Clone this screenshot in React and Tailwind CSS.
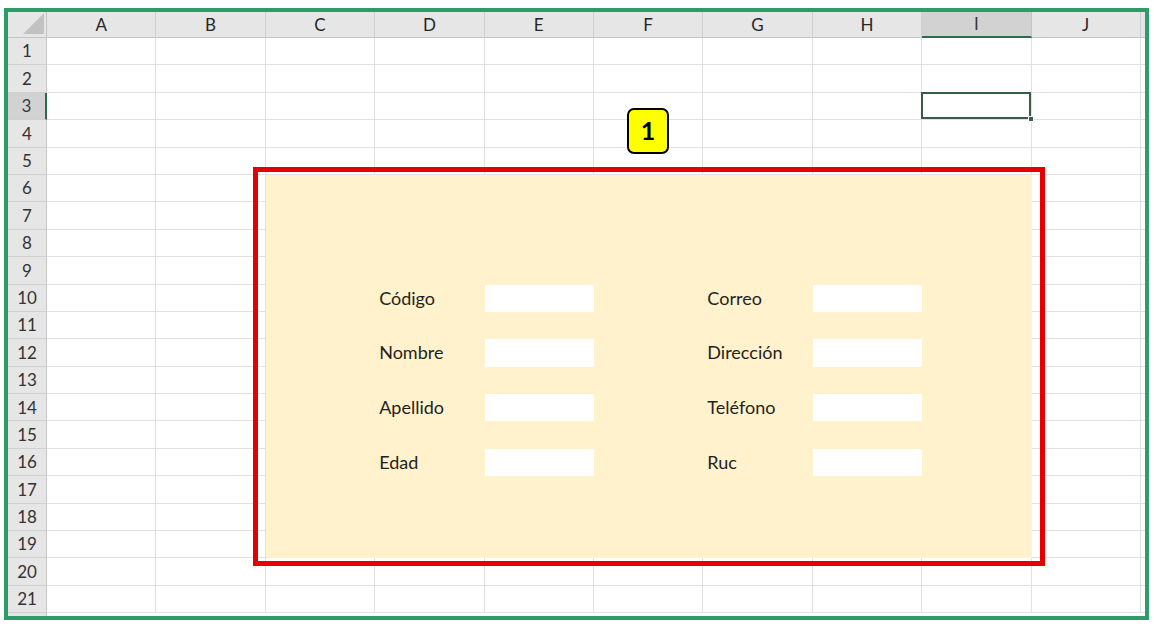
import React from "react";

const COLS = ["A", "B", "C", "D", "E", "F", "G", "H", "I", "J"];

// labels keyed by "row-col" (col index: A=0)
const LABELS = {
  "10-3": "Código",
  "12-3": "Nombre",
  "14-3": "Apellido",
  "16-3": "Edad",
  "10-6": "Correo",
  "12-6": "Dirección",
  "14-6": "Teléfono",
  "16-6": "Ruc",
};

const isBeige = (r, c) => r >= 6 && r <= 19 && c >= 2 && c <= 8;
const isBox = (r, c) => [10, 12, 14, 16].includes(r) && (c === 4 || c === 7);

function HeaderRow() {
  return (
    <>
      <div className="relative bg-[#e6e6e6] border-r border-b border-[#c4c4c4]">
        <div className="absolute right-[2px] bottom-[3px] w-0 h-0 border-l-[21px] border-l-transparent border-b-[21px] border-b-[#c2c2c2]" />
      </div>
      {COLS.map((name, i) =>
        i === 8 ? (
          <div
            key={name}
            className="flex items-center justify-center bg-[#d2d2d2] border-r border-[#c4c4c4] border-b-2 border-b-[#2f6b4a] text-[#3a3a3a] text-[17px]"
          >
            {name}
          </div>
        ) : (
          <div
            key={name}
            className="flex items-center justify-center bg-[#e6e6e6] border-r border-b border-[#d0d0d0] border-b-[#c4c4c4] text-[#262626] text-[17px]"
          >
            {name}
          </div>
        )
      )}
      <div className="bg-[#e6e6e6] border-b border-[#c4c4c4]" />
    </>
  );
}

function Cell({ r, c }) {
  const key = `${r}-${c}`;
  const label = LABELS[key];

  if (r === 3 && c === 8) {
    return (
      <div className="relative bg-white border-r border-b border-[#e1e1e1]">
        <div className="absolute -left-px -top-px right-0 bottom-0 border-2 border-[#3b5a47]" />
        <div className="absolute -right-[3px] -bottom-[3px] w-[6px] h-[6px] bg-[#3b5a47] border border-white" />
      </div>
    );
  }
  if (isBox(r, c)) {
    return <div className="bg-white" />;
  }
  if (isBeige(r, c)) {
    return (
      <div className="flex items-center bg-[#fff2cc] pl-1 text-[18px] text-[#1f1f1f] whitespace-nowrap overflow-visible">
        {label}
      </div>
    );
  }
  return <div className="bg-white border-r border-b border-[#e1e1e1]" />;
}

export default function App() {
  const rows = Array.from({ length: 21 }, (_, i) => i + 1);

  return (
    <div
      className="w-[1154px] h-[626px] bg-white pt-[8px] pl-[4px]"
      style={{ fontFamily: "Lato, 'Open Sans', sans-serif" }}
    >
      <div className="w-[1145px] h-[612px] border-4 border-[#2e9c68] overflow-hidden">
        <div className="relative grid h-full grid-cols-[39px_repeat(10,109.4px)_1fr] grid-rows-[26px_repeat(21,27.4px)_1fr]">
          <HeaderRow />

          {rows.map((r) => (
            <React.Fragment key={r}>
              {r === 3 ? (
                <div className="flex items-center justify-center bg-[#d2d2d2] border-b border-[#d0d0d0] border-r-2 border-r-[#2f6b4a] text-[#3a3a3a] text-[17px]">
                  {r}
                </div>
              ) : (
                <div className="flex items-center justify-center bg-[#e6e6e6] border-b border-[#d0d0d0] border-r border-r-[#c4c4c4] text-[#333] text-[17px]">
                  {r}
                </div>
              )}
              {COLS.map((_, c) => (
                <Cell key={c} r={r} c={c} />
              ))}
              <div className="bg-white border-b border-[#e1e1e1]" />
            </React.Fragment>
          ))}

          <div className="bg-[#e6e6e6] border-r border-[#c4c4c4]" />
          <div className="col-span-11 bg-white" />

          {/* annotation: red frame around the form */}
          <div className="absolute left-[245px] top-[155px] w-[792px] h-[399px] border-[5px] border-[#e60000] pointer-events-none" />

          {/* annotation: step badge */}
          <div className="absolute left-[619px] top-[96px] w-[42px] h-[46px] flex items-center justify-center rounded-[7px] border-2 border-black bg-[#ffff00] text-[25px] font-bold text-black">
            1
          </div>
        </div>
      </div>
    </div>
  );
}
